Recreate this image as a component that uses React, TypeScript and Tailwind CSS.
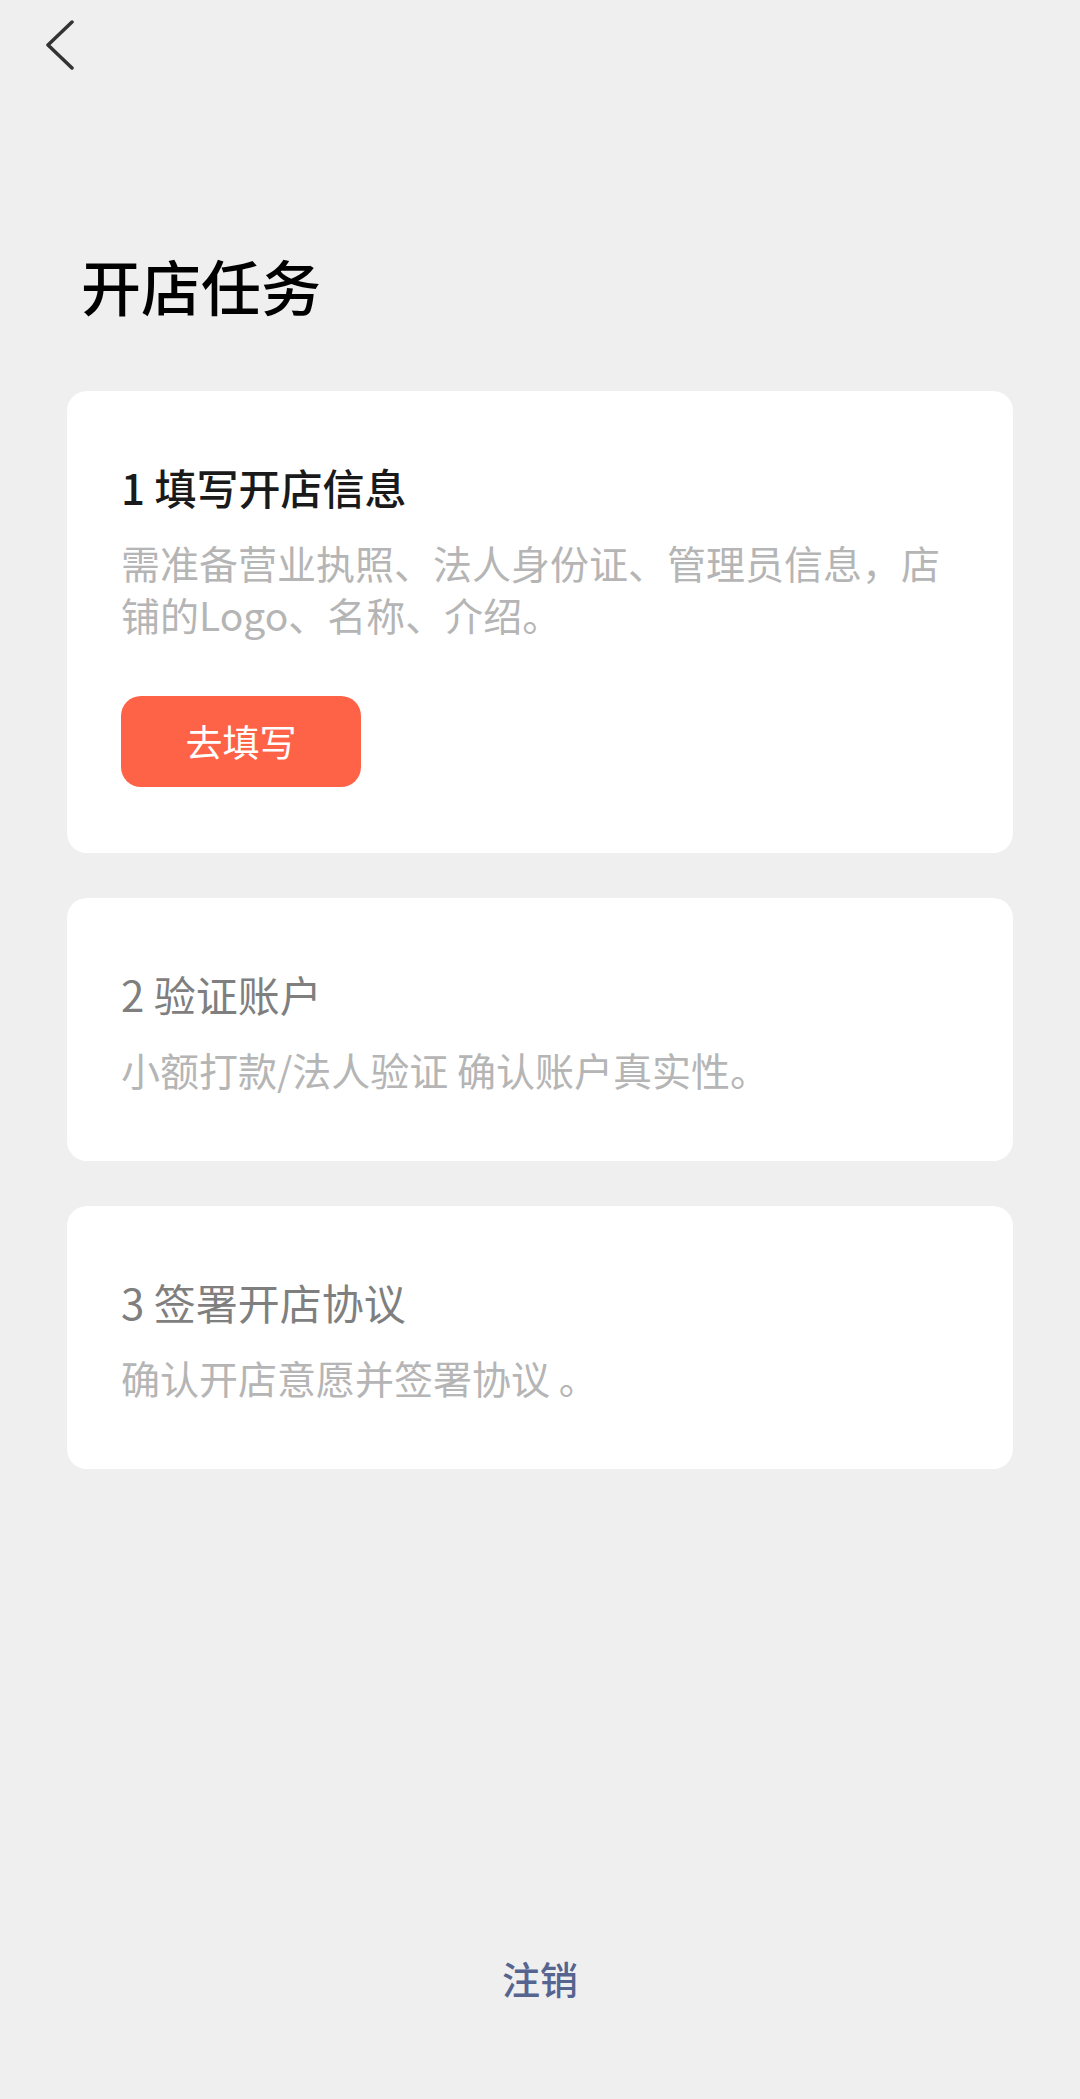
import React from "react";

const FONT = { fontFamily: '"Noto Sans CJK SC", "Noto Sans", sans-serif' };

type Task = {
  no: number;
  title: string;
  desc: string;
  active?: boolean;
};

const tasks: Task[] = [
  {
    no: 1,
    title: "填写开店信息",
    desc: "需准备营业执照、法人身份证、管理员信息，店铺的Logo、名称、介绍。",
    active: true,
  },
  { no: 2, title: "验证账户", desc: "小额打款/法人验证 确认账户真实性。" },
  { no: 3, title: "签署开店协议", desc: "确认开店意愿并签署协议 。" },
];

function TaskCard({ task }: { task: Task }) {
  return (
    <div className="bg-white rounded-[20px] pt-[70px] pb-[66px] pl-[54px] pr-[54px]">
      <h2
        className={`text-[42px] leading-[52px] ${
          task.active ? "text-[#1a1a1a] font-medium" : "text-[#7f7f7f]"
        }`}
      >
        {task.no} {task.title}
      </h2>
      <p className="mt-[23px] text-[39px] leading-[52px] text-[#b5b5b5]">{task.desc}</p>
      {task.active && (
        <button className="mt-[56px] w-[240px] h-[91px] rounded-[20px] bg-[#ff6347] text-white text-[37px] flex items-center justify-center">
          去填写
        </button>
      )}
    </div>
  );
}

export default function App() {
  return (
    <div className="h-[2099px] bg-[#efefef] flex flex-col" style={FONT}>
      <header className="h-[90px] flex items-center pl-[44px]">
        <svg width="32" height="50" viewBox="0 0 32 50" fill="none">
          <polyline
            points="28,2 4,25 28,48"
            stroke="#333333"
            strokeWidth="3.5"
            strokeLinecap="round"
            strokeLinejoin="round"
          />
        </svg>
      </header>

      <h1 className="mt-[155px] pl-[81px] text-[60px] leading-[80px] font-medium text-black">
        开店任务
      </h1>

      <main className="mt-[66px] px-[67px] flex flex-col gap-[45px]">
        {tasks.map((t) => (
          <TaskCard key={t.no} task={t} />
        ))}
      </main>

      <div className="flex-1" />

      <div className="pb-[91px] flex justify-center">
        <span className="text-[38px] leading-[60px] font-medium text-[#56658f]">注销</span>
      </div>
    </div>
  );
}
